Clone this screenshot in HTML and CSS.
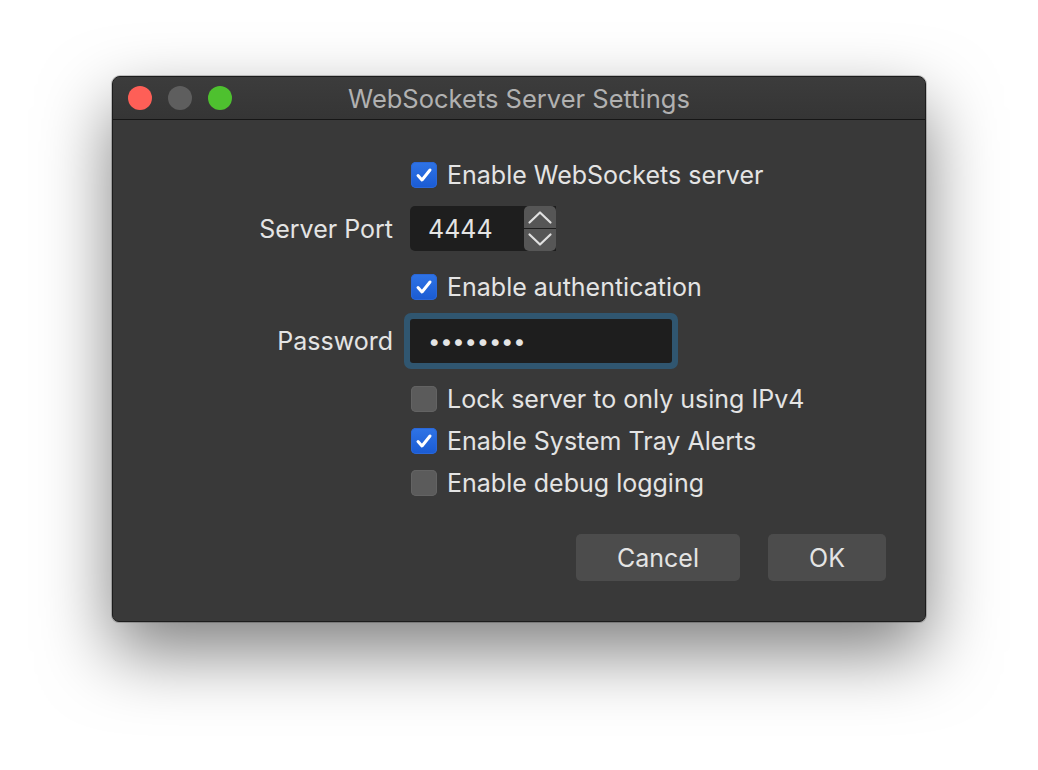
FILE: index.html
```html
<!DOCTYPE html>
<html lang="en">
<head>
<meta charset="UTF-8">
<title>WebSockets Server Settings</title>
<link rel="stylesheet" href="styles.css">
</head>
<body>
<div class="window">
  <!-- Title bar -->
  <div class="titlebar">
    <div class="lights">
      <span class="light red"></span>
      <span class="light gray"></span>
      <span class="light green"></span>
    </div>
    <div class="title">WebSockets Server Settings</div>
  </div>

  <!-- Settings form -->
  <form class="form">
    <div class="row row-first">
      <div class="label"></div>
      <label class="check"><span class="box on"><svg viewBox="0 0 26 26"><path d="M7 13.5l4 4.5 8-10"/></svg></span>Enable WebSockets server</label>
    </div>
    <div class="row row-port">
      <div class="label">Server Port</div>
      <div class="spin">
        <div class="spin-value">4444</div>
        <div class="spin-btns">
          <span class="spin-btn"><svg viewBox="0 0 32 22"><path d="M5.5 16.5l10.5-10 10.5 10"/></svg></span>
          <span class="spin-btn"><svg viewBox="0 0 32 22"><path d="M5.5 5.5l10.5 10 10.5-10"/></svg></span>
        </div>
      </div>
    </div>
    <div class="row row-auth">
      <div class="label"></div>
      <label class="check"><span class="box on"><svg viewBox="0 0 26 26"><path d="M7 13.5l4 4.5 8-10"/></svg></span>Enable authentication</label>
    </div>
    <div class="row row-pass">
      <div class="label">Password</div>
      <div class="ring"><div class="field">••••••••</div></div>
    </div>
    <div class="row row-opt">
      <div class="label"></div>
      <label class="check"><span class="box"></span>Lock server to only using IPv4</label>
    </div>
    <div class="row row-tight">
      <div class="label"></div>
      <label class="check"><span class="box on"><svg viewBox="0 0 26 26"><path d="M7 13.5l4 4.5 8-10"/></svg></span>Enable System Tray Alerts</label>
    </div>
    <div class="row row-tight">
      <div class="label"></div>
      <label class="check"><span class="box"></span>Enable debug logging</label>
    </div>

    <div class="buttons">
      <button type="button" class="btn btn-cancel">Cancel</button>
      <button type="button" class="btn btn-ok">OK</button>
    </div>
  </form>
</div>
</body>
</html>
```

FILE: styles.css
```css
html, body {
    min-height: 100%;
}
body {
    margin: 0;
    min-height: 770px;
    box-sizing: border-box;
    padding: 76px 0 0 112px;
    background: #ffffff;
    font-family: Inter, "Liberation Sans", Arial, sans-serif;
    color: #e4e4e4;
}
.window {
    width: 814px;
    height: 546px;
    box-sizing: border-box;
    background: #393939;
    border: 1px solid #1c1c1c;
    border-radius: 8px 8px 7px 7px;
    box-shadow: 0 30px 70px rgba(0, 0, 0, 0.5), 0 0 0 1px rgba(110, 110, 110, 0.35);
    overflow: hidden;
}
.titlebar {
    height: 42px;
    display: flex;
    align-items: center;
    position: relative;
    background: linear-gradient(#3c3c3c, #353535);
    border-bottom: 1px solid #161616;
}
.lights {
    display: flex;
    gap: 16px;
    padding-left: 15px;
}
.light {
    width: 24px;
    height: 24px;
    border-radius: 50%;
}
.red { background: #fe5f57; }
.gray { background: #5e5e5e; }
.green { background: #4ec12f; }
.title {
    position: absolute;
    left: 0;
    right: 0;
    text-align: center;
    font-size: 25.5px;
    color: #b1b1b1;
    pointer-events: none;
}
.form {
    display: flex;
    flex-direction: column;
    padding-top: 34px;
}
.row {
    display: flex;
    align-items: center;
    height: 42px;
}
.row-port { height: 45px; margin-top: 10px; }
.row-auth { margin-top: 15px; }
.row-pass { height: 56px; margin-top: 5px; }
.row-opt { margin-top: 9px; }
.label {
    width: 280px;
    flex: none;
    text-align: right;
    font-size: 25px;
    margin-right: 17px;
}
.row-pass .label { margin-right: 11px; }
.check {
    display: flex;
    align-items: center;
    gap: 10px;
    font-size: 25px;
    margin-left: 1px;
}
.box {
    width: 26px;
    height: 26px;
    border-radius: 5px;
    background: #5b5b5b;
    box-shadow: inset 0 0 0 1px #636363;
    flex: none;
    display: flex;
}
.box.on {
    background: linear-gradient(#2f74e6, #1a5bd3);
    box-shadow: inset 0 0 0 1px #2a67d8;
}
.box svg {
    width: 26px;
    height: 26px;
    fill: none;
    stroke: #ffffff;
    stroke-width: 3;
    stroke-linecap: round;
    stroke-linejoin: round;
}
.spin {
    display: flex;
    height: 45px;
}
.spin-value {
    width: 114px;
    background: #1e1e1e;
    border-radius: 5px 0 0 5px;
    font-size: 25px;
    padding-left: 18px;
    box-sizing: border-box;
    display: flex;
    align-items: center;
}
.spin-btns {
    width: 32px;
    display: flex;
    flex-direction: column;
    gap: 1px;
    background: #1e1e1e;
}
.spin-btn {
    flex: 1;
    background: #565656;
    display: flex;
}
.spin-btn:first-child { border-radius: 5px 5px 0 0; }
.spin-btn:last-child { border-radius: 0 0 5px 5px; }
.spin-btn svg {
    width: 32px;
    height: 22px;
    fill: none;
    stroke: #e0e0e0;
    stroke-width: 2.2;
    stroke-linecap: round;
    stroke-linejoin: round;
}
.ring {
    padding: 6px;
    border-radius: 7px;
    background: #305670;
}
.field {
    width: 262px;
    height: 44px;
    box-sizing: border-box;
    background: #1e1e1e;
    border-radius: 3px;
    padding-left: 18px;
    font-size: 22px;
    letter-spacing: -0.2px;
    display: flex;
    align-items: center;
}
.buttons {
    display: flex;
    justify-content: flex-end;
    gap: 28px;
    margin-top: 30px;
    padding-right: 39px;
}
.btn {
    height: 47px;
    border: none;
    border-radius: 5px;
    background: #4c4c4c;
    color: #e4e4e4;
    font-family: inherit;
    font-size: 25px;
}
.btn-cancel { width: 164px; }
.btn-ok { width: 118px; }
```
